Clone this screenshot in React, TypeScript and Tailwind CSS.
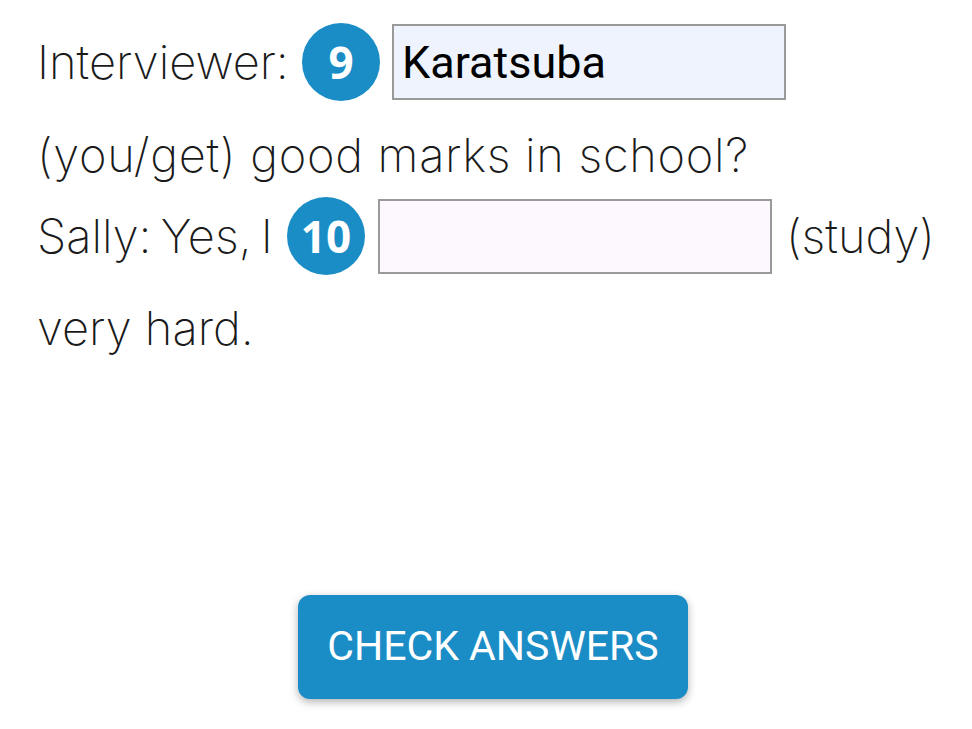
function Badge({ n }: { n: string }) {
    return (
        <span className="flex h-[78px] w-[78px] shrink-0 items-center justify-center rounded-full bg-[#1b8dc6] font-['Open_Sans',sans-serif] text-[44px] font-bold text-white">
            {n}
        </span>
    );
}

export default function App() {
    return (
        <div className="min-h-[729px] w-[972px] bg-white pl-[37px] font-['Inter',sans-serif] text-[47px] font-extralight text-[#1a1a1a]">
            <div className="mt-[23px] flex h-[78px] items-center">
                <span className="w-[253px] shrink-0 whitespace-nowrap">Interviewer:</span>
                <span className="ml-[12px]"><Badge n="9" /></span>
                <input
                    readOnly
                    value="Karatsuba"
                    className="ml-[12px] h-[76px] w-[394px] border-2 border-[#9a9a9a] bg-[#eef3fd] px-[8px] font-['Roboto',sans-serif] text-[45px] font-normal text-black outline-none"
                />
            </div>
            <div className="mt-[15px] flex h-[78px] items-center">
                <span className="whitespace-nowrap tracking-[0.7px]">(you/get) good marks in school?</span>
            </div>
            <div className="mt-[3px] flex h-[78px] items-center">
                <span className="w-[238px] shrink-0 whitespace-nowrap [word-spacing:-4px]">Sally: Yes, I</span>
                <span className="ml-[12px]"><Badge n="10" /></span>
                <input
                    readOnly
                    value=""
                    className="ml-[13px] h-[75px] w-[394px] border-2 border-[#9a9a9a] bg-[#fdf8fd] px-[8px] font-['Roboto',sans-serif] text-[45px] text-black outline-none"
                />
                <span className="ml-[14px] whitespace-nowrap">(study)</span>
            </div>
            <div className="mt-[14px] flex h-[78px] items-center">
                <span>very hard.</span>
            </div>
            <div className="mt-[228px] flex">
                <button className="ml-[261px] h-[104px] w-[390px] rounded-[12px] bg-[#1b8dc6] font-['Roboto',sans-serif] text-[41px] font-normal text-white shadow-[0_3px_8px_rgba(0,0,0,0.3)]">
                    CHECK ANSWERS
                </button>
            </div>
        </div>
    );
}
